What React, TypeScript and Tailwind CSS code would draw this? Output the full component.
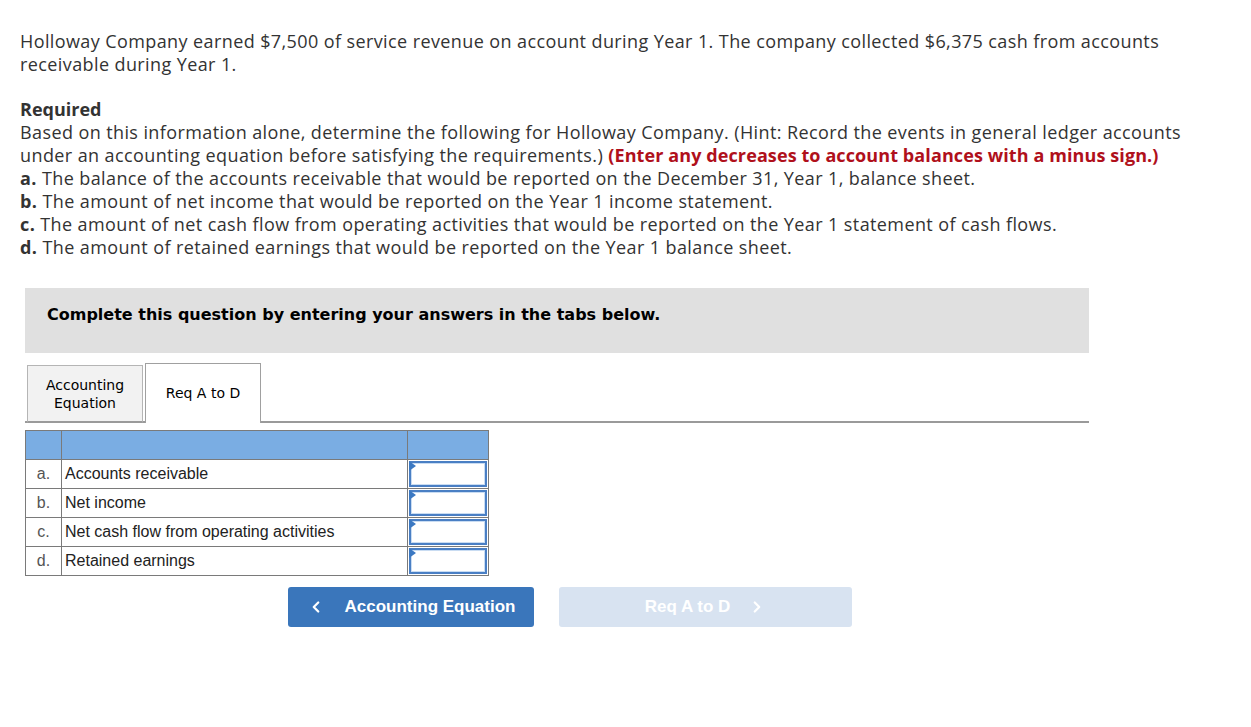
import { ChevronLeft, ChevronRight } from "lucide-react";

const items = [
  { key: "a.", label: "Accounts receivable" },
  { key: "b.", label: "Net income" },
  { key: "c.", label: "Net cash flow from operating activities" },
  { key: "d.", label: "Retained earnings" },
];

function AnswerInput() {
  return (
    <div className="relative h-full w-full p-px">
      <div className="h-full w-full border-2 border-[#4a7fc4] bg-white shadow-[inset_0_0_0_1px_#c9dcf2]" />
      <div className="absolute left-[1px] top-[1px] h-0 w-0 border-y-[5px] border-l-[7px] border-y-transparent border-l-[#3b78c2]" />
    </div>
  );
}

export default function App() {
  return (
    <div className="min-h-screen bg-white text-[#333] font-['Open_Sans','Lato',sans-serif]">
      <div className="px-5 pt-[30px] text-[18px] leading-[23px] tracking-[0.4px] w-[1215px]">
        <p>
          Holloway Company earned $7,500 of service revenue on account during Year 1. The company collected $6,375 cash from accounts receivable during Year 1.
        </p>
        <div className="mt-[22px]">
          <div className="font-bold tracking-normal">Required</div>
          <p>
            Based on this information alone, determine the following for Holloway Company. (Hint: Record the events in general ledger accounts under an accounting equation before satisfying the requirements.){" "}
            <span className="font-bold tracking-[0.1px] text-[#b0101b]">(Enter any decreases to account balances with a minus sign.)</span>
          </p>
          <p><span className="font-bold">a.</span> The balance of the accounts receivable that would be reported on the December 31, Year 1, balance sheet.</p>
          <p><span className="font-bold">b.</span> The amount of net income that would be reported on the Year 1 income statement.</p>
          <p><span className="font-bold">c.</span> The amount of net cash flow from operating activities that would be reported on the Year 1 statement of cash flows.</p>
          <p><span className="font-bold">d.</span> The amount of retained earnings that would be reported on the Year 1 balance sheet.</p>
        </div>
      </div>

      <div className="ml-[25px] mt-[29px] w-[1064px]">
        <div className="h-[65px] bg-[#e0e0e0] px-[22px] pt-[17px] font-['DejaVu_Sans',sans-serif] text-[16px] leading-[19px] font-bold text-black">
          Complete this question by entering your answers in the tabs below.
        </div>

        <div className="mt-[10px] flex items-end border-b-2 border-[#9a9a9a] pl-[2px] font-['DejaVu_Sans',sans-serif] text-[14px] leading-[18px] text-black">
          <div className="-mb-[2px] flex h-[58px] w-[116px] items-center justify-center border border-b-2 border-[#b5b5b5] border-b-[#9a9a9a] bg-[#f2f2f2] text-center">
            Accounting<br />Equation
          </div>
          <div className="-mb-[2px] ml-[2px] flex h-[60px] w-[116px] items-center justify-center border border-b-0 border-[#a0a0a0] bg-white pb-[2px]">
            Req A to D
          </div>
        </div>

        <table className="mt-[7px] w-[464px] border-collapse font-['Liberation_Sans',Arial,sans-serif] text-[16px] text-[#222]">
          <thead>
            <tr className="h-[29px] bg-[#7aade3]">
              <th className="w-[36px] border border-[#7a7a7a]" />
              <th className="w-[346px] border border-[#7a7a7a]" />
              <th className="border border-[#7a7a7a]" />
            </tr>
          </thead>
          <tbody>
            {items.map((it) => (
              <tr key={it.key} className="h-[29px]">
                <td className="border border-[#7a7a7a] text-center text-[#555]">{it.key}</td>
                <td className="border border-[#7a7a7a] px-[3px]">{it.label}</td>
                <td className="h-[29px] border border-[#7a7a7a] p-0">
                  <AnswerInput />
                </td>
              </tr>
            ))}
          </tbody>
        </table>
      </div>

      <div className="ml-[288px] mt-[11px] flex gap-[25px] font-['Liberation_Sans',Arial,sans-serif] text-[17px] font-bold text-white">
        <button className="flex h-[40px] w-[246px] items-center justify-center gap-[20px] rounded-[3px] bg-[#3a76bb]">
          <ChevronLeft className="h-[18px] w-[18px]" strokeWidth={3} />
          Accounting Equation
        </button>
        <button className="flex h-[40px] w-[293px] items-center justify-center gap-[18px] rounded-[3px] bg-[#d8e3f1]">
          Req A to D
          <ChevronRight className="h-[18px] w-[18px]" strokeWidth={3} />
        </button>
      </div>
    </div>
  );
}
